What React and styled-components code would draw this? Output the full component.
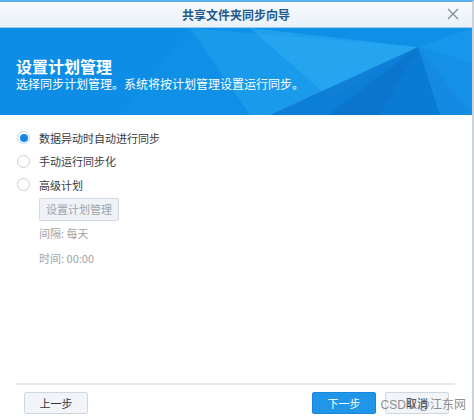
import styled, { createGlobalStyle } from "styled-components"

const GlobalStyle = createGlobalStyle`
   html, body {
      margin: 0;
      padding: 0;
      background: #fff;
   }
   body {
      font-family: "Microsoft YaHei", "Noto Sans CJK SC", "Noto Sans", sans-serif;
   }
`

const Window = styled.div`
   position: relative;
   width: 474px;
   height: 420px;
   box-sizing: border-box;
   border-top: 2px solid #5eb0ec;
   border-right: 2px solid #cfd3d8;
   display: flex;
   flex-direction: column;
   overflow: hidden;
   background: #fff;
`

const TitleBar = styled.div`
   height: 25px;
   flex-shrink: 0;
   display: flex;
   align-items: center;
   justify-content: center;
   position: relative;
   background: linear-gradient(#f7fafd, #e9f1f8);
   border-bottom: 1px solid #9ccbef;
   color: #1f5a8f;
   font-size: 12px;
   font-weight: bold;
`

const Close = styled.span`
   position: absolute;
   right: 12px;
   top: 5px;
   width: 14px;
   height: 14px;
`

const Banner = styled.div`
   position: relative;
   height: 87px;
   flex-shrink: 0;
   background: #0e90e7;
   color: #fff;
   display: flex;
   flex-direction: column;
   justify-content: center;
   gap: 1px;
   padding-left: 16px;
   padding-top: 4px;
   box-sizing: border-box;
`

const Facets = styled.svg`
   position: absolute;
   inset: 0;
   width: 100%;
   height: 100%;
`

const BannerTitle = styled.div`
   position: relative;
   font-size: 16px;
   font-weight: bold;
   line-height: 20px;
   height: 20px;
`

const BannerSub = styled.div`
   position: relative;
   font-size: 12px;
   line-height: 14px;
   height: 14px;
`

const Body = styled.div`
   flex: 1;
   padding: 11px 0 0 17px;
   display: flex;
   flex-direction: column;
`

const Option = styled.label`
   display: flex;
   align-items: center;
   gap: 9px;
   height: 23.5px;
   font-size: 11px;
   color: #3a3a3a;
`

const Radio = styled.span`
   width: 13px;
   height: 13px;
   border-radius: 50%;
   box-sizing: border-box;
   border: 1px solid ${p => (p.$on ? "#b7d6f2" : "#c9ced4")};
   background: #fff;
   display: flex;
   align-items: center;
   justify-content: center;
   &::after {
      content: "";
      width: 8px;
      height: 8px;
      border-radius: 50%;
      background: ${p => (p.$on ? "#1787e4" : "transparent")};
   }
`

const Sub = styled.div`
   padding-left: 22px;
   display: flex;
   flex-direction: column;
   align-items: flex-start;
`

const GhostButton = styled.button`
   margin-top: 1px;
   width: 80px;
   height: 23px;
   border: 1px solid #d3d9e0;
   border-radius: 2px;
   background: #eff3f8;
   color: #9ea4aa;
   font-family: inherit;
   font-size: 11px;
   padding: 0;
`

const Note = styled.div`
   font-size: 11px;
   color: #a0a4a8;
   margin-top: ${p => p.$gap}px;
   line-height: 14px;
`

const Footer = styled.div`
   margin: 0 17px 0 16px;
   border-top: 2px solid #e6e8ea;
   height: 35px;
   display: flex;
   align-items: center;
   padding: 0 6px 0 8px;
   gap: 9px;
`

const Button = styled.button`
   width: 64px;
   height: 22px;
   border-radius: 2px;
   padding: 0;
   font-family: inherit;
   font-size: 11px;
   border: 1px solid ${p => (p.$primary ? "#1a86dc" : "#d0d6dd")};
   background: ${p => (p.$primary ? "#2196e9" : "#f1f4f8")};
   color: ${p => (p.$primary ? "#fff" : "#333")};
   margin-left: ${p => (p.$push ? "auto" : "0")};
`

const Mark = styled.div`
   position: absolute;
   right: 6px;
   bottom: 8px;
   font-family: "Liberation Sans", "Noto Sans CJK SC", sans-serif;
   font-size: 12px;
   color: rgba(120, 120, 120, 0.85);
`

const App = () => {
   return (
      <Window>
         <GlobalStyle />
         <TitleBar>
            共享文件夹同步向导
            <Close>
               <svg width="14" height="14" viewBox="0 0 14 14">
                  <path d="M2 2 L12 12 M12 2 L2 12" stroke="#8a9096" strokeWidth="1.4" />
               </svg>
            </Close>
         </TitleBar>
         <Banner>
            <Facets viewBox="0 0 472 87" preserveAspectRatio="none">
               <polygon points="190,0 418,19 325,87 250,87" fill="#22a2ee" opacity="0.55" />
               <polygon points="250,0 418,19 330,70" fill="#35b2f4" opacity="0.45" />
               <polygon points="418,19 472,0 472,35" fill="#1d9ded" opacity="0.6" />
               <polygon points="270,87 418,19 472,87" fill="#0a74cd" opacity="0.75" />
               <polygon points="418,19 472,35 472,87 440,87" fill="#1690e3" opacity="0.8" />
               <polygon points="330,87 418,19 380,87" fill="#0b6fc6" opacity="0.5" />
               <polygon points="0,0 190,0 120,87 0,87" fill="#0c8ae4" opacity="0.4" />
            </Facets>
            <BannerTitle>设置计划管理</BannerTitle>
            <BannerSub>选择同步计划管理。系统将按计划管理设置运行同步。</BannerSub>
         </Banner>
         <Body>
            <Option><Radio $on />数据异动时自动进行同步</Option>
            <Option><Radio />手动运行同步化</Option>
            <Option><Radio />高级计划</Option>
            <Sub>
               <GhostButton>设置计划管理</GhostButton>
               <Note $gap={5}>间隔: 每天</Note>
               <Note $gap={11}>时间: 00:00</Note>
            </Sub>
         </Body>
         <Footer>
            <Button>上一步</Button>
            <Button $primary $push>下一步</Button>
            <Button>取消</Button>
         </Footer>
         <Mark>CSDN @江东网</Mark>
      </Window>
   )
}

export default App
